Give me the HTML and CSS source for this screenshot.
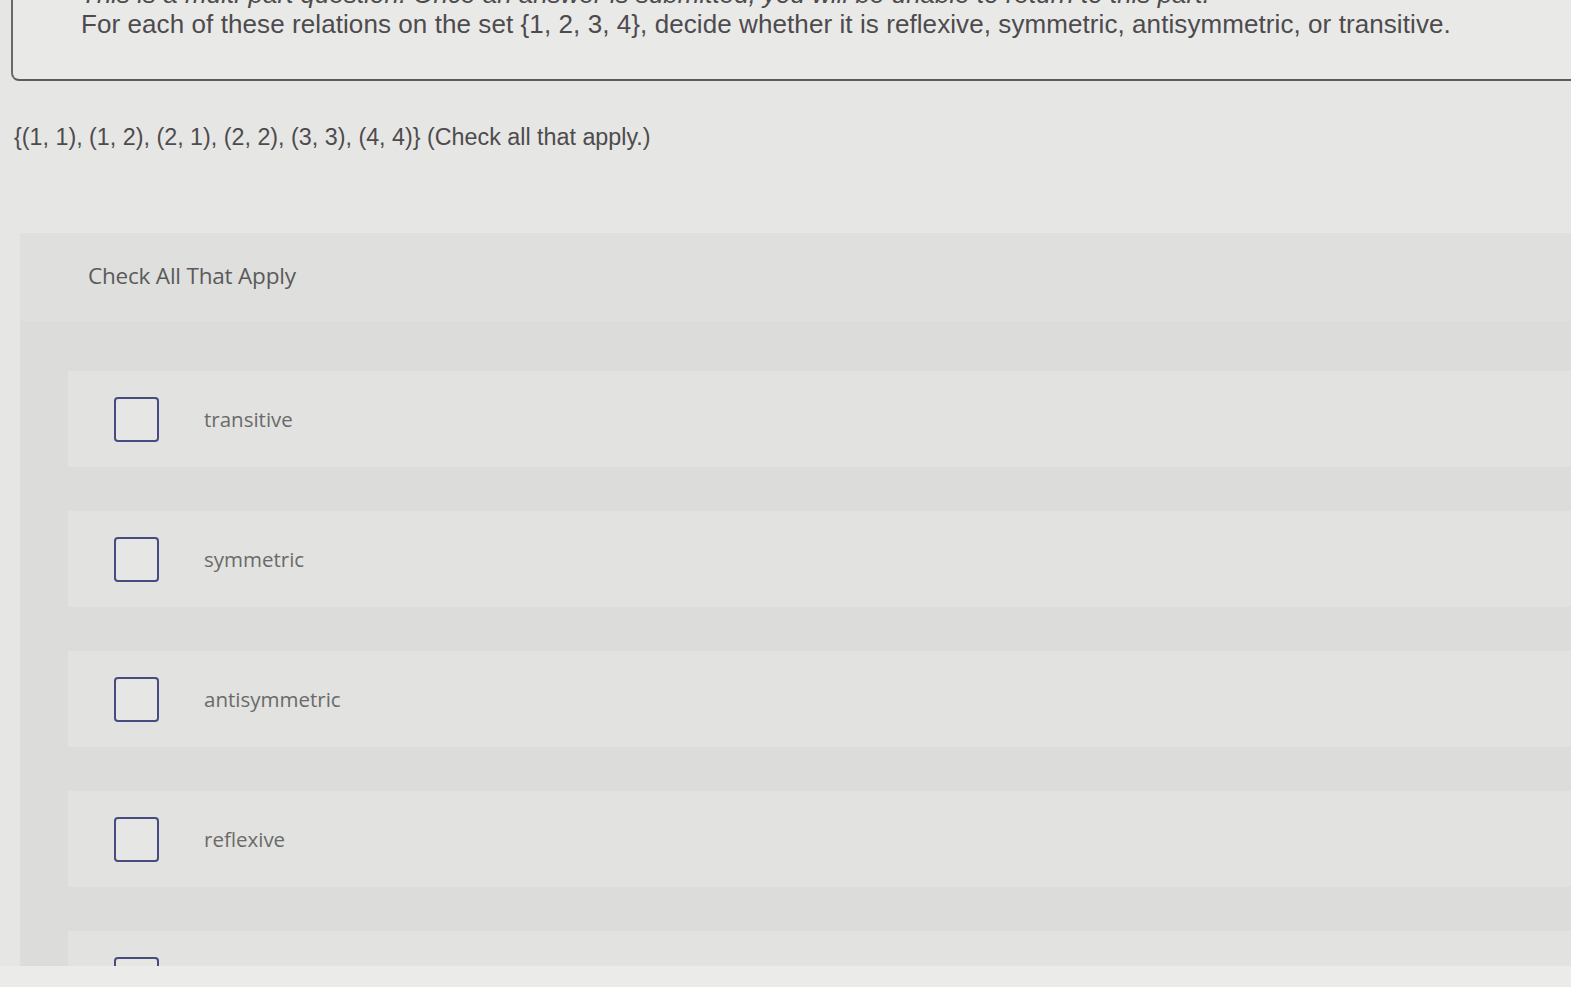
FILE: index.html
```html
<!DOCTYPE html>
<html lang="en">
<head>
<meta charset="utf-8">
<title>Check All That Apply</title>
<link rel="stylesheet" href="styles.css">
</head>
<body>
<div class="page">
  <section class="prompt-box">
    <p class="note">This is a multi-part question. Once an answer is submitted, you will be unable to return to this part.</p>
    <p class="question">For each of these relations on the set {1, 2, 3, 4}, decide whether it is reflexive, symmetric, antisymmetric, or transitive.</p>
  </section>
  <p class="relation">{(1, 1), (1, 2), (2, 1), (2, 2), (3, 3), (4, 4)} (Check all that apply.)</p>
  <section class="panel">
    <div class="panel-head">Check All That Apply</div>
    <ul class="options">
      <li class="option"><span class="box"></span><span class="label">transitive</span></li>
      <li class="option"><span class="box"></span><span class="label">symmetric</span></li>
      <li class="option"><span class="box"></span><span class="label">antisymmetric</span></li>
      <li class="option"><span class="box"></span><span class="label">reflexive</span></li>
      <li class="option"><span class="box"></span></li>
    </ul>
  </section>
</div>
</body>
</html>
```

FILE: styles.css
```css
html, body {
  margin: 0;
  padding: 0;
  height: 100%;
  overflow: hidden;
}
body {
  background: #ebebe9;
  font-family: "Liberation Sans", Arial, sans-serif;
}
.page {
  display: flex;
  flex-direction: column;
  height: 966px;
  overflow: hidden;
  background: #e6e6e4;
}
.prompt-box {
  flex: none;
  margin: -20px 0 0 11px;
  padding: 0 0 41px 68px;
  border-left: 2px solid #6a6a6c;
  border-bottom: 2px solid #5c5c60;
  border-bottom-left-radius: 8px;
  background: #e9e9e7;
}
.note {
  margin: 0;
  font-size: 26px;
  line-height: 28px;
  font-style: italic;
  color: #4d4b4e;
  white-space: nowrap;
}
.question {
  margin: 2px 0 0;
  font-size: 26px;
  line-height: 28px;
  color: #4d4b4e;
  white-space: nowrap;
  letter-spacing: 0.08px;
}
.relation {
  flex: none;
  margin: 42px 0 0;
  padding-left: 14px;
  font-size: 23.3px;
  line-height: 28px;
  color: #4d4b4e;
  white-space: nowrap;
}
.panel {
  flex: none;
  margin: 82px 0 0 20px;
  background: #dcdcda;
}
.panel-head {
  padding: 29px 0 31px 68px;
  font-family: "Open Sans", "Liberation Sans", sans-serif;
  font-size: 22.5px;
  line-height: 28px;
  color: #5a5a5a;
  letter-spacing: -0.2px;
  background: #dfdfdd;
}
.options {
  list-style: none;
  margin: 0;
  padding: 50px 0 0 48px;
  display: flex;
  flex-direction: column;
  gap: 44px;
}
.option {
  height: 96px;
  display: flex;
  align-items: center;
  padding-left: 46px;
  gap: 45px;
  background: #e2e2e0;
}
.box {
  flex: none;
  width: 41px;
  height: 41px;
  border: 2.5px solid #474b80;
  border-radius: 4px;
  background: #e6e6e5;
}
.label {
  font-family: "Open Sans", "Liberation Sans", sans-serif;
  font-size: 20.5px;
  color: #6a6a6a;
  letter-spacing: 0;
}
```
